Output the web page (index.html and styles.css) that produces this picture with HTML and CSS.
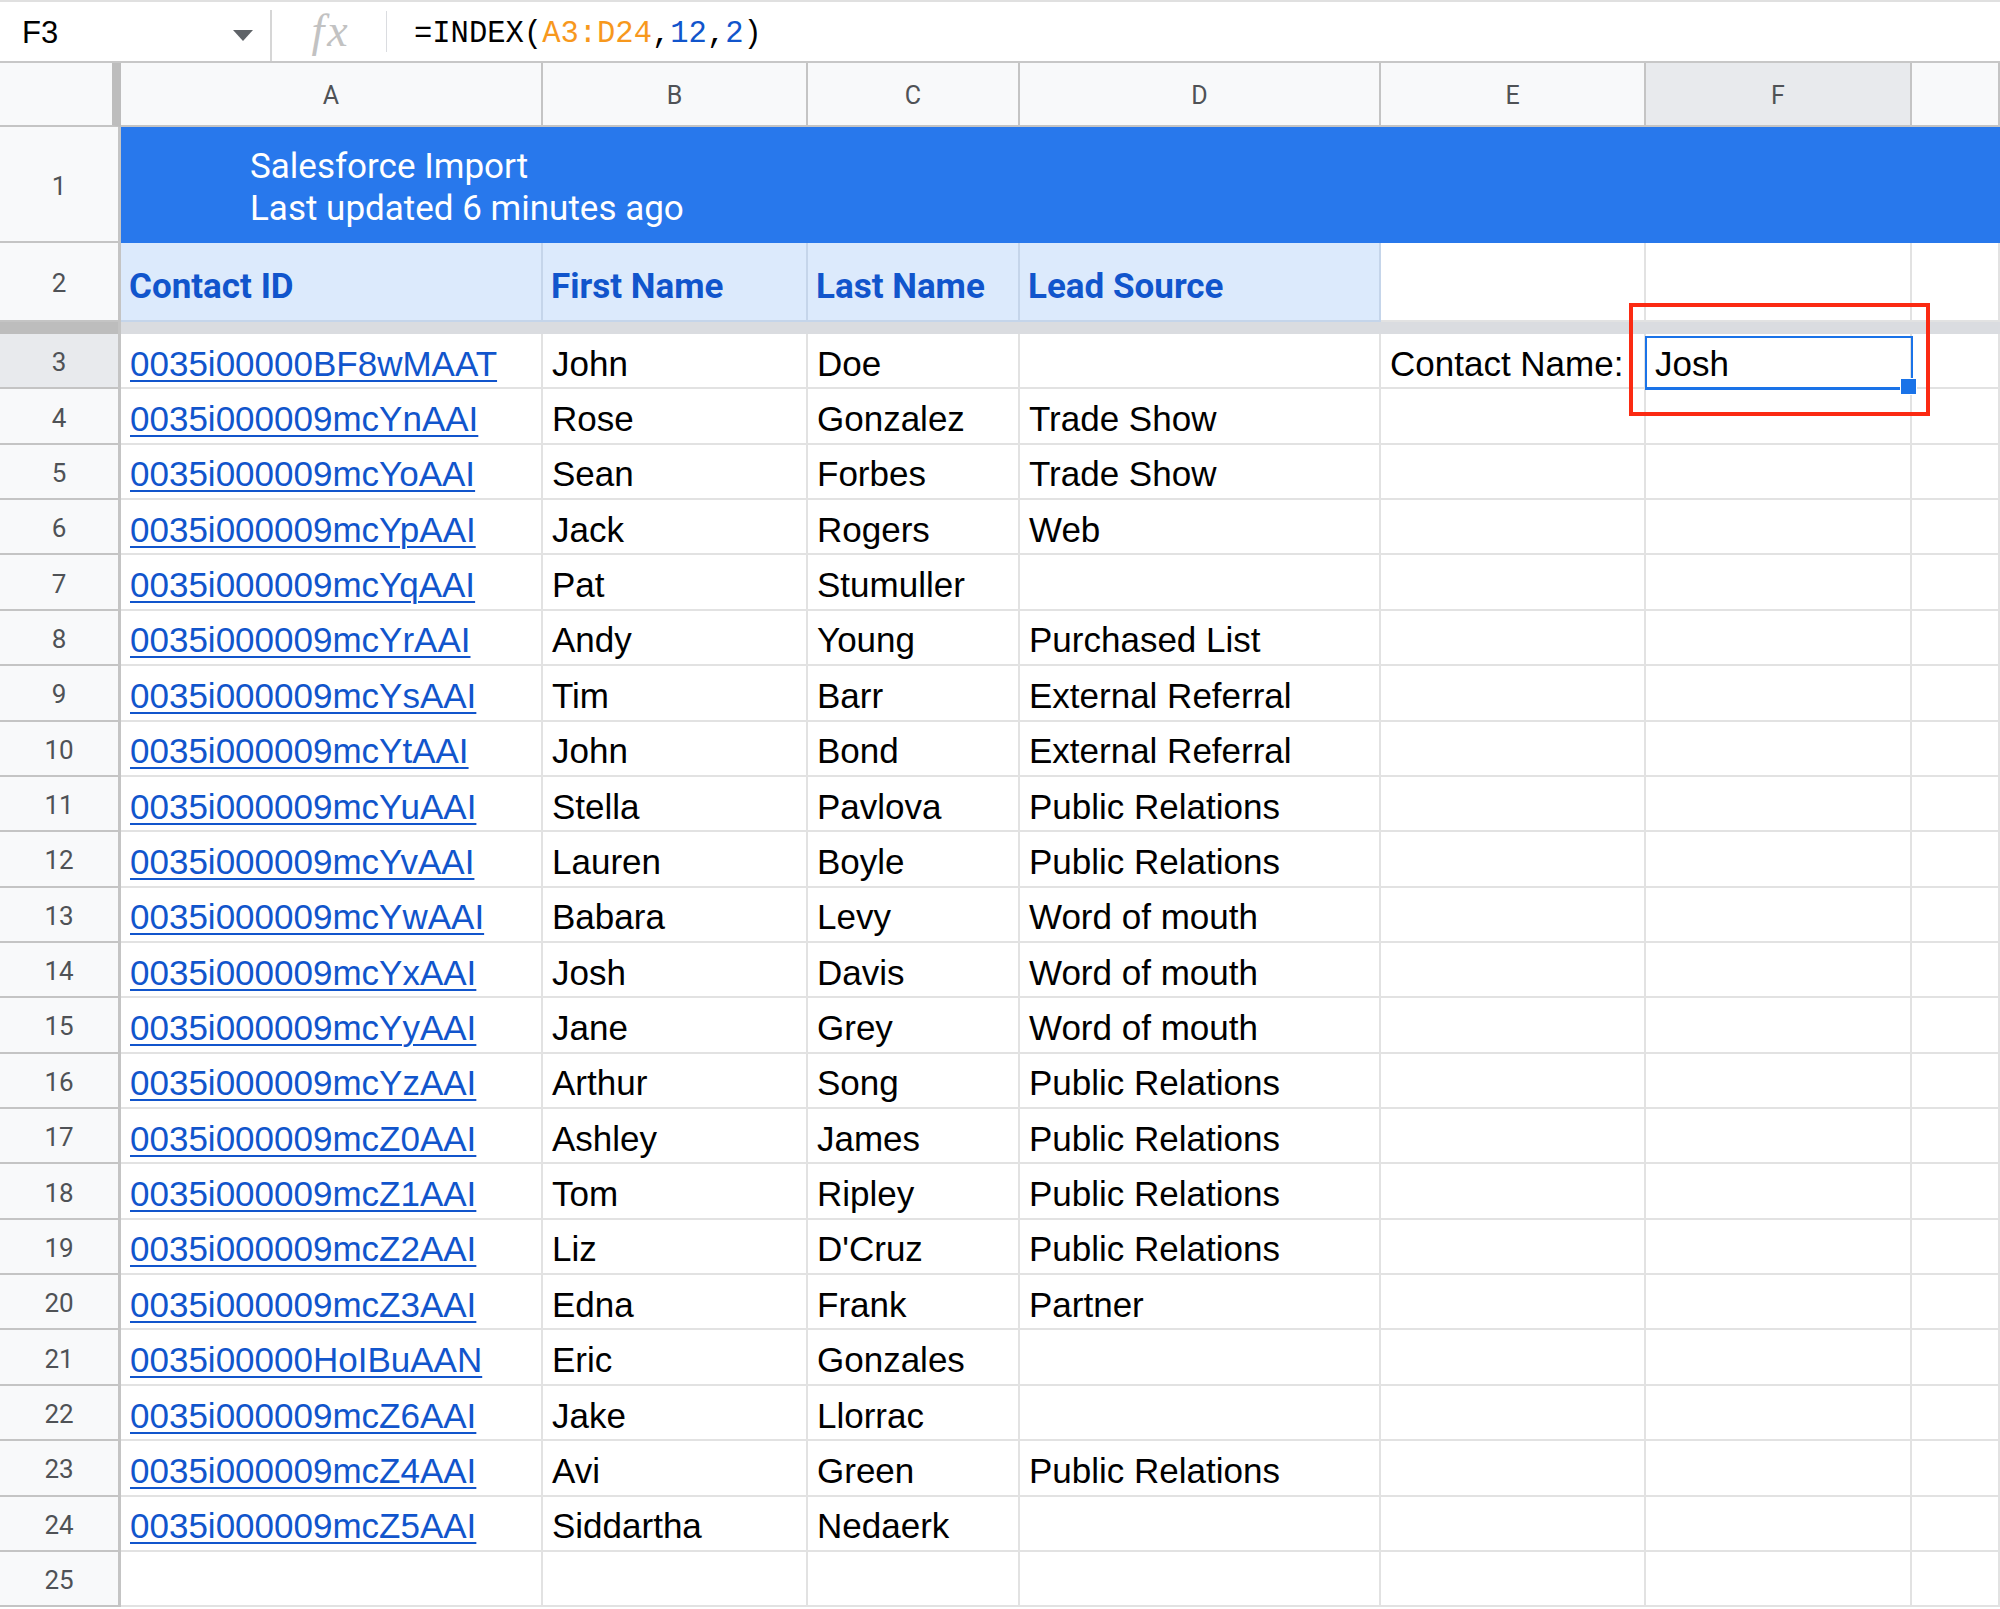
FILE: index.html
```html
<!DOCTYPE html>
<html lang="en">
<head>
<meta charset="utf-8">
<title>Salesforce Import</title>
<link rel="stylesheet" href="styles.css">
</head>
<body>
<div class="formula-bar">
  <div class="name-box"><span class="ref">F3</span><span class="caret"></span></div>
  <div class="divider"></div>
  <div class="fx">fx</div>
  <div class="divider-thin"></div>
  <div class="formula">=INDEX(<span class="range">A3:D24</span>,<span class="num">12</span>,<span class="num">2</span>)</div>
</div>

<div class="sheet">
  <div class="row">
    <div class="corner"></div>
    <div class="ch">A</div><div class="ch">B</div><div class="ch">C</div><div class="ch">D</div><div class="ch">E</div><div class="ch active">F</div><div class="ch"></div>
  </div>

  <div class="row">
    <div class="rh">1</div>
    <div class="title"><span>Salesforce Import</span><span>Last updated 6 minutes ago</span></div>
  </div>

  <div class="row">
    <div class="rh">2</div>
    <div class="c hd">Contact ID</div><div class="c hd">First Name</div><div class="c hd">Last Name</div><div class="c hd">Lead Source</div><div class="c"></div><div class="c"></div><div class="c"></div>
  </div>

  <div class="row">
    <div class="band-h"></div><div class="band"></div>
  </div>

  <div class="row">
    <div class="rh active">3</div>
    <div class="c"><a class="link">0035i00000BF8wMAAT</a></div><div class="c">John</div><div class="c">Doe</div><div class="c"></div><div class="c">Contact Name:</div>
    <div class="c sel">Josh<span class="handle"></span><span class="callout"></span></div><div class="c"></div>
  </div>
  <div class="row">
    <div class="rh">4</div>
    <div class="c"><a class="link">0035i000009mcYnAAI</a></div><div class="c">Rose</div><div class="c">Gonzalez</div><div class="c">Trade Show</div><div class="c"></div><div class="c"></div><div class="c"></div>
  </div>
  <div class="row">
    <div class="rh">5</div>
    <div class="c"><a class="link">0035i000009mcYoAAI</a></div><div class="c">Sean</div><div class="c">Forbes</div><div class="c">Trade Show</div><div class="c"></div><div class="c"></div><div class="c"></div>
  </div>
  <div class="row">
    <div class="rh">6</div>
    <div class="c"><a class="link">0035i000009mcYpAAI</a></div><div class="c">Jack</div><div class="c">Rogers</div><div class="c">Web</div><div class="c"></div><div class="c"></div><div class="c"></div>
  </div>
  <div class="row">
    <div class="rh">7</div>
    <div class="c"><a class="link">0035i000009mcYqAAI</a></div><div class="c">Pat</div><div class="c">Stumuller</div><div class="c"></div><div class="c"></div><div class="c"></div><div class="c"></div>
  </div>
  <div class="row">
    <div class="rh">8</div>
    <div class="c"><a class="link">0035i000009mcYrAAI</a></div><div class="c">Andy</div><div class="c">Young</div><div class="c">Purchased List</div><div class="c"></div><div class="c"></div><div class="c"></div>
  </div>
  <div class="row">
    <div class="rh">9</div>
    <div class="c"><a class="link">0035i000009mcYsAAI</a></div><div class="c">Tim</div><div class="c">Barr</div><div class="c">External Referral</div><div class="c"></div><div class="c"></div><div class="c"></div>
  </div>
  <div class="row">
    <div class="rh">10</div>
    <div class="c"><a class="link">0035i000009mcYtAAI</a></div><div class="c">John</div><div class="c">Bond</div><div class="c">External Referral</div><div class="c"></div><div class="c"></div><div class="c"></div>
  </div>
  <div class="row">
    <div class="rh">11</div>
    <div class="c"><a class="link">0035i000009mcYuAAI</a></div><div class="c">Stella</div><div class="c">Pavlova</div><div class="c">Public Relations</div><div class="c"></div><div class="c"></div><div class="c"></div>
  </div>
  <div class="row">
    <div class="rh">12</div>
    <div class="c"><a class="link">0035i000009mcYvAAI</a></div><div class="c">Lauren</div><div class="c">Boyle</div><div class="c">Public Relations</div><div class="c"></div><div class="c"></div><div class="c"></div>
  </div>
  <div class="row">
    <div class="rh">13</div>
    <div class="c"><a class="link">0035i000009mcYwAAI</a></div><div class="c">Babara</div><div class="c">Levy</div><div class="c">Word of mouth</div><div class="c"></div><div class="c"></div><div class="c"></div>
  </div>
  <div class="row">
    <div class="rh">14</div>
    <div class="c"><a class="link">0035i000009mcYxAAI</a></div><div class="c">Josh</div><div class="c">Davis</div><div class="c">Word of mouth</div><div class="c"></div><div class="c"></div><div class="c"></div>
  </div>
  <div class="row">
    <div class="rh">15</div>
    <div class="c"><a class="link">0035i000009mcYyAAI</a></div><div class="c">Jane</div><div class="c">Grey</div><div class="c">Word of mouth</div><div class="c"></div><div class="c"></div><div class="c"></div>
  </div>
  <div class="row">
    <div class="rh">16</div>
    <div class="c"><a class="link">0035i000009mcYzAAI</a></div><div class="c">Arthur</div><div class="c">Song</div><div class="c">Public Relations</div><div class="c"></div><div class="c"></div><div class="c"></div>
  </div>
  <div class="row">
    <div class="rh">17</div>
    <div class="c"><a class="link">0035i000009mcZ0AAI</a></div><div class="c">Ashley</div><div class="c">James</div><div class="c">Public Relations</div><div class="c"></div><div class="c"></div><div class="c"></div>
  </div>
  <div class="row">
    <div class="rh">18</div>
    <div class="c"><a class="link">0035i000009mcZ1AAI</a></div><div class="c">Tom</div><div class="c">Ripley</div><div class="c">Public Relations</div><div class="c"></div><div class="c"></div><div class="c"></div>
  </div>
  <div class="row">
    <div class="rh">19</div>
    <div class="c"><a class="link">0035i000009mcZ2AAI</a></div><div class="c">Liz</div><div class="c">D'Cruz</div><div class="c">Public Relations</div><div class="c"></div><div class="c"></div><div class="c"></div>
  </div>
  <div class="row">
    <div class="rh">20</div>
    <div class="c"><a class="link">0035i000009mcZ3AAI</a></div><div class="c">Edna</div><div class="c">Frank</div><div class="c">Partner</div><div class="c"></div><div class="c"></div><div class="c"></div>
  </div>
  <div class="row">
    <div class="rh">21</div>
    <div class="c"><a class="link">0035i00000HoIBuAAN</a></div><div class="c">Eric</div><div class="c">Gonzales</div><div class="c"></div><div class="c"></div><div class="c"></div><div class="c"></div>
  </div>
  <div class="row">
    <div class="rh">22</div>
    <div class="c"><a class="link">0035i000009mcZ6AAI</a></div><div class="c">Jake</div><div class="c">Llorrac</div><div class="c"></div><div class="c"></div><div class="c"></div><div class="c"></div>
  </div>
  <div class="row">
    <div class="rh">23</div>
    <div class="c"><a class="link">0035i000009mcZ4AAI</a></div><div class="c">Avi</div><div class="c">Green</div><div class="c">Public Relations</div><div class="c"></div><div class="c"></div><div class="c"></div>
  </div>
  <div class="row">
    <div class="rh">24</div>
    <div class="c"><a class="link">0035i000009mcZ5AAI</a></div><div class="c">Siddartha</div><div class="c">Nedaerk</div><div class="c"></div><div class="c"></div><div class="c"></div><div class="c"></div>
  </div>
  <div class="row">
    <div class="rh">25</div>
    <div class="c"></div><div class="c"></div><div class="c"></div><div class="c"></div><div class="c"></div><div class="c"></div><div class="c"></div>
  </div>
</div>
</body>
</html>
```

FILE: styles.css
```css
* { box-sizing: border-box; }

html, body {
  margin: 0;
  background: #ffffff;
}

body {
  width: 2000px;
  height: 1609px;
  overflow: hidden;
  font-family: "Liberation Sans", Arial, sans-serif;
  color: #000;
}

/* ---------- formula bar ---------- */
.formula-bar {
  display: flex;
  align-items: center;
  height: 63px;
  border-top: 2px solid #e0e0e0;
  border-bottom: 2px solid #c7c7c7;
}

.name-box {
  width: 270px;
  height: 100%;
  display: flex;
  align-items: center;
  padding: 2px 17px 0 22px;
  font-family: "Liberation Sans", Arial, sans-serif;
  font-size: 31px;
}

.name-box .ref { flex: 1; }

.caret {
  width: 0;
  height: 0;
  margin-top: 6px;
  border-left: 10px solid transparent;
  border-right: 10px solid transparent;
  border-top: 11px solid #5f6368;
}

.divider {
  width: 2px;
  align-self: stretch;
  margin-top: 8px;
  background: #d6d6d6;
}

.fx {
  width: 114px;
  text-align: center;
  font-family: "Liberation Serif", serif;
  font-style: italic;
  font-size: 46px;
  letter-spacing: 3px;
  padding-left: 4px;
  color: #c2c2c2;
  margin-top: -2px;
}

.divider-thin {
  width: 1px;
  height: 41px;
  background: #dadce0;
}

.formula {
  padding-left: 27px;
  font-family: "Liberation Mono", monospace;
  font-size: 30.5px;
  margin-top: 5px;
}

.formula .range { color: #f7981d; }
.formula .num { color: #1155cc; }

/* ---------- grid ---------- */
.sheet {
  display: grid;
  grid-template-columns: 121px 422px 265px 212px 361px 265px 266px 1fr;
  grid-template-rows: 64px 116px 79px 12px;
  grid-auto-rows: 55.36px;
}

.row { display: contents; }

.corner {
  background: #f8f9fa;
  border-right: 9px solid #bdbdbd;
  border-bottom: 2px solid #c4c4c4;
}

.ch {
  display: flex;
  align-items: center;
  justify-content: center;
  background: #f8f9fa;
  border-right: 2px solid #c4c4c4;
  border-bottom: 2px solid #c4c4c4;
  font-family: Roboto, sans-serif;
  font-size: 25px;
  color: #4f5256;
  padding-top: 3px;
}

.ch.active { background: #e8eaed; }

.rh {
  display: flex;
  align-items: center;
  justify-content: center;
  background: #f8f9fa;
  border-right: 3px solid #c4c4c4;
  border-bottom: 2px solid #c4c4c4;
  font-family: Roboto, sans-serif;
  font-size: 26px;
  color: #4f5256;
  padding-top: 3px;
}

.rh.active { background: #e8eaed; }

.title {
  grid-column: 2 / -1;
  display: flex;
  flex-direction: column;
  justify-content: center;
  padding-left: 129px;
  padding-top: 5px;
  background: #2878ec;
  color: #fff;
  font-family: Roboto, sans-serif;
  font-size: 35px;
  line-height: 42px;
}

.c {
  display: flex;
  align-items: center;
  padding: 6px 8px 0 9px;
  border-right: 2px solid #e2e2e2;
  border-bottom: 2px solid #e2e2e2;
  white-space: nowrap;
  overflow: hidden;
  font-size: 35px;
}

.c.hd {
  background: #dceafc;
  border-right-color: #c5d5ea;
  border-bottom-color: #c5d5ea;
  font-family: Roboto, sans-serif;
  font-weight: 700;
  color: #1155cc;
  padding: 10px 8px 0;
}

.band-h { background: #bdbdbd; border-right: 3px solid #c4c4c4; }
.band { grid-column: 2 / -1; background: #dadce0; }

.link {
  color: #1155cc;
  text-decoration: underline;
  text-decoration-thickness: 2px;
  text-underline-offset: 4px;
}

/* ---------- active cell ---------- */
.c.sel {
  position: relative;
  overflow: visible;
}

.c.sel::before {
  content: "";
  position: absolute;
  left: -1px;
  top: 2px;
  right: -3px;
  bottom: -3px;
  border: 2px solid #1a73e8;
  border-bottom-width: 3px;
}

.handle {
  position: absolute;
  right: -7px;
  bottom: -8px;
  width: 17px;
  height: 17px;
  background: #1a73e8;
  border: 1px solid #fff;
}

.callout {
  position: absolute;
  left: -17px;
  top: -31px;
  width: 301px;
  height: 113px;
  border: 4px solid #fb2a12;
}
```
